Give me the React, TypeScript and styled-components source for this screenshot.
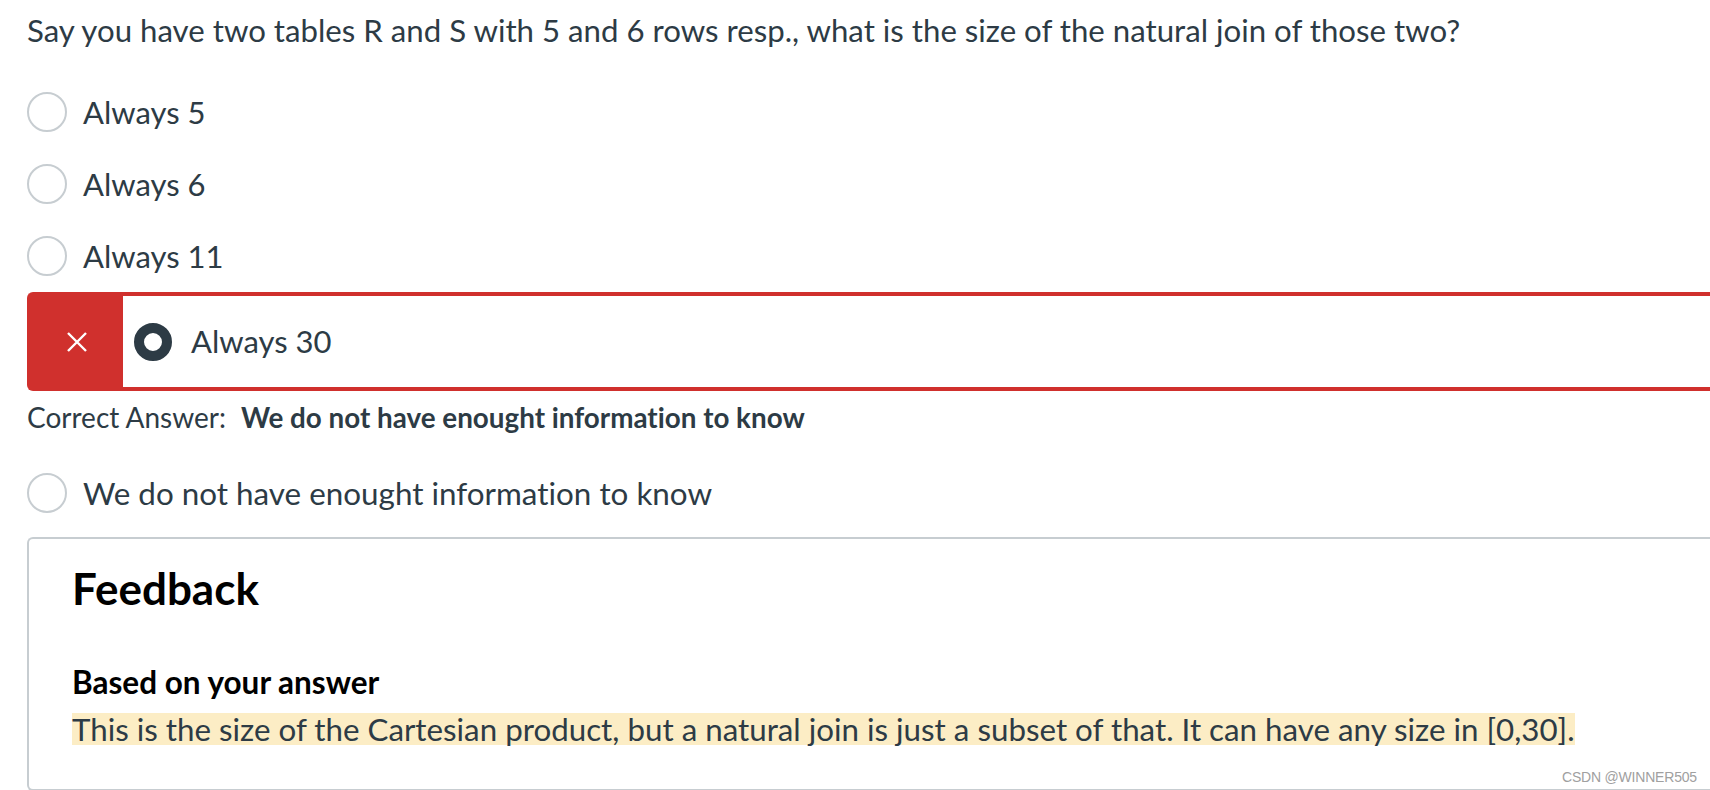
import styled, { createGlobalStyle } from 'styled-components';

const GlobalStyle = createGlobalStyle`
  html, body {
    margin: 0;
    padding: 0;
    background: #fff;
    overflow: hidden;
  }
  body {
    font-family: Lato, "Noto Sans", sans-serif;
    font-variant-ligatures: none;
    color: #2d3b45;
  }
`;

const options = ['Always 5', 'Always 6', 'Always 11'];

const App = () => {
  return (
    <>
      <GlobalStyle />
      <Page>
        <Question>
          Say you have two tables R and S with 5 and 6 rows resp., what is the size of the
          natural join of those two?
        </Question>

        {options.map((o) => (
          <OptionRow key={o}>
            <Radio />
            <OptionLabel>{o}</OptionLabel>
          </OptionRow>
        ))}

        <WrongAnswer>
          <WrongMark>
            <svg width="22" height="22" viewBox="0 0 22 22">
              <path d="M2 2 L20 20 M20 2 L2 20" stroke="#fff" strokeWidth="2.4" />
            </svg>
          </WrongMark>
          <WrongBody>
            <SelectedRadio />
            <OptionLabel>Always 30</OptionLabel>
          </WrongBody>
        </WrongAnswer>

        <CorrectLine>
          Correct Answer:<strong>We do not have enought information to know</strong>
        </CorrectLine>

        <OptionRow $spaced>
          <Radio />
          <OptionLabel $wide>We do not have enought information to know</OptionLabel>
        </OptionRow>

        <FeedbackBox>
          <FeedbackTitle>Feedback</FeedbackTitle>
          <FeedbackSubtitle>Based on your answer</FeedbackSubtitle>
          <FeedbackText>
            <mark>
              This is the size of the Cartesian product, but a natural join is just a subset of
              that. It can have any size in [0,30].
            </mark>
          </FeedbackText>
          <Watermark>CSDN @WINNER505</Watermark>
        </FeedbackBox>
      </Page>
    </>
  );
};

export default App;

const Page = styled.div`
  width: 1800px;
  box-sizing: border-box;
  padding: 12px 0 0 27px;
`;

const Question = styled.p`
  margin: 0 0 28px;
  font-size: 31.2px;
  line-height: 36px;
  white-space: nowrap;
`;

const OptionRow = styled.div<{ $spaced?: boolean }>`
  display: flex;
  align-items: center;
  gap: 16px;
  height: 72px;
  margin-top: ${(p) => (p.$spaced ? '23px' : '0')};
`;

const Radio = styled.span`
  width: 40px;
  height: 40px;
  box-sizing: border-box;
  border: 2px solid #c7cdd1;
  border-radius: 50%;
  background: #fff;
  flex-shrink: 0;
`;

const SelectedRadio = styled.span`
  width: 38px;
  height: 38px;
  box-sizing: border-box;
  border: 10px solid #2d3b45;
  border-radius: 50%;
  background: #fff;
  flex-shrink: 0;
`;

const OptionLabel = styled.span<{ $wide?: boolean }>`
  font-size: ${(p) => (p.$wide ? '31.4px' : '31px')};
  line-height: 37px;
  white-space: nowrap;
`;

const WrongAnswer = styled.div`
  display: flex;
  height: 99px;
  box-sizing: border-box;
  border: 4px solid #d0302d;
  border-right: none;
  border-radius: 6px 0 0 6px;
`;

const WrongMark = styled.div`
  display: flex;
  align-items: center;
  justify-content: center;
  width: 92px;
  background: #d0302d;
`;

const WrongBody = styled.div`
  display: flex;
  align-items: center;
  gap: 19px;
  padding-left: 11px;
`;

const CorrectLine = styled.div`
  margin-top: 10px;
  font-size: 28px;
  line-height: 32px;
  white-space: nowrap;

  strong {
    font-size: 27.8px;
    font-weight: 700;
    margin-left: 15px;
  }
`;

const FeedbackBox = styled.div`
  position: relative;
  margin-top: 8px;
  box-sizing: border-box;
  border: 2px solid #c7cdd1;
  border-right: none;
  border-radius: 6px 0 0 6px;
  padding: 23px 0 43px 43px;
`;

const FeedbackTitle = styled.h2`
  margin: 0;
  font-size: 44px;
  line-height: 53px;
  font-weight: 700;
  color: #000;
`;

const FeedbackSubtitle = styled.h3`
  margin: 50px 0 13px;
  font-size: 31.5px;
  line-height: 34px;
  font-weight: 700;
  color: #000;
`;

const FeedbackText = styled.p`
  margin: 0;
  font-size: 31.3px;
  line-height: 34px;
  white-space: nowrap;

  mark {
    display: inline-block;
    line-height: 32px;
    background: #fcedc5;
    color: #2d3b45;
  }
`;

const Watermark = styled.span`
  position: absolute;
  left: 1533px;
  bottom: 4px;
  font-family: "Liberation Sans", Arial, sans-serif;
  font-size: 14px;
  color: #a0a0a0;
  letter-spacing: -0.2px;
`;
